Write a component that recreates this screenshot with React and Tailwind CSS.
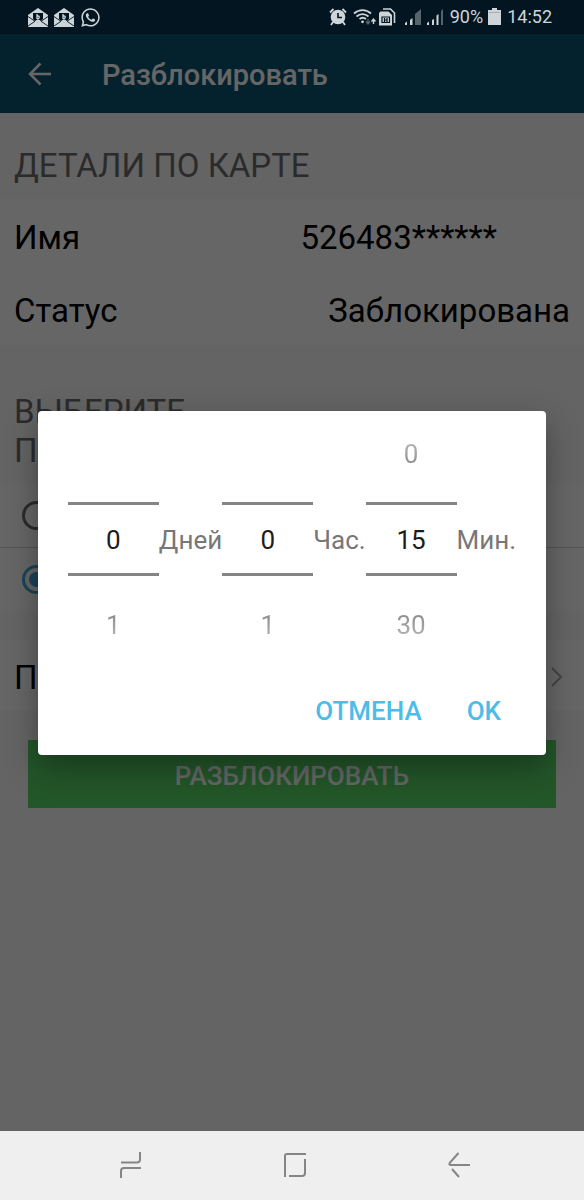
import { useState } from "react";
import { FaWhatsapp } from "react-icons/fa";

const initialPickers = [
  { id: "days", label: "Дней", options: ["0", "1", "2", "3"], index: 0 },
  { id: "hours", label: "Час.", options: ["0", "1", "2", "3"], index: 0 },
  { id: "minutes", label: "Мин.", options: ["0", "15", "30", "45"], index: 1 },
];

function App() {
  const [pickers, setPickers] = useState(initialPickers);
  const [mode, setMode] = useState("period");
  const [open, setOpen] = useState(true);

  const movePicker = (id, step) => {
    setPickers((previous) =>
      previous.map((picker) =>
        picker.id === id && picker.options[picker.index + step] !== undefined
          ? { ...picker, index: picker.index + step }
          : picker
      )
    );
  };

  return (
    <div className="flex min-h-screen flex-col bg-[#f9f9f9] font-[Roboto,sans-serif]">
      <StatusBar />

      <div className="relative flex flex-1 flex-col">
        <header className="flex h-[79px] items-center gap-[50px] bg-[#0b5473] px-7 text-white">
          <button type="button" aria-label="Назад">
            <BackArrow />
          </button>
          <h1 className="pt-[2px] text-[29px] font-medium leading-8">
            Разблокировать
          </h1>
        </header>

        <main className="flex-1 text-[33px] leading-[39px] text-black">
          <SectionTitle>ДЕТАЛИ ПО КАРТЕ</SectionTitle>

          <dl className="bg-white px-[14px]">
            <div className="flex h-[73px] items-center justify-between pt-1">
              <dt>Имя</dt>
              <dd className="pr-[73px]">526483******</dd>
            </div>
            <div className="flex h-[73px] items-center justify-between pt-1">
              <dt>Статус</dt>
              <dd>Заблокирована</dd>
            </div>
          </dl>

          <div className="pt-[14px]">
            <SectionTitle>
              ВЫБЕРИТЕ
              <br />П
            </SectionTitle>
          </div>

          <div className="bg-white">
            <RadioRow
              label="Бессрочно"
              checked={mode === "forever"}
              onChange={() => setMode("forever")}
            />
            <div className="h-px bg-[#d0d0d0]" />
            <RadioRow
              label="На период"
              checked={mode === "period"}
              onChange={() => setMode("period")}
            />
          </div>

          <button
            type="button"
            className="mt-[29px] flex h-[70px] w-full items-center justify-between bg-white pl-[14px] pr-[21px] pt-1"
          >
            <span>П</span>
            <svg width="13" height="22" viewBox="0 0 13 22" fill="none" stroke="#aaa" strokeWidth="2">
              <path d="M2 2l9 9-9 9" />
            </svg>
          </button>

          <div className="px-7 pt-[30px]">
            <button
              type="button"
              className="h-[68px] w-full bg-[#58d868] pt-1 text-[26px] font-medium text-white"
            >
              РАЗБЛОКИРОВАТЬ
            </button>
          </div>
        </main>

        {open && (
          <div className="absolute inset-0 flex items-center bg-black/60 px-[38px]">
            <div
              role="dialog"
              aria-modal="true"
              className="w-full rounded-[4px] bg-white shadow-[0_12px_32px_rgba(0,0,0,0.35)]"
            >
              <div className="flex justify-center">
                {pickers.map((picker) => (
                  <NumberPicker
                    key={picker.id}
                    picker={picker}
                    onMove={(step) => movePicker(picker.id, step)}
                  />
                ))}
              </div>

              <div className="flex justify-end gap-[45px] pb-6 pr-[45px] pt-[22px] text-[26px] font-medium leading-[39px] text-[#4dbce9]">
                <button type="button" onClick={() => setOpen(false)}>
                  ОТМЕНА
                </button>
                <button type="button" onClick={() => setOpen(false)}>
                  OK
                </button>
              </div>
            </div>
          </div>
        )}
      </div>

      <NavigationBar />
    </div>
  );
}

function SectionTitle({ children }) {
  return (
    <h2 className="px-[14px] pb-[14px] pt-[33px] text-[33px] leading-[39px] text-[#6c6c6c]">
      {children}
    </h2>
  );
}

function RadioRow({ label, checked, onChange }) {
  return (
    <div className="flex h-[63px] items-center px-[22px]">
      <input
        type="radio"
        name="mode"
        aria-label={label}
        checked={checked}
        onChange={onChange}
        className="grid size-[29px] appearance-none place-items-center rounded-full border-[3px] border-[#6c6c6c] before:size-[15px] before:rounded-full checked:border-[#3fa9dc] checked:before:bg-[#3fa9dc]"
      />
    </div>
  );
}

function NumberPicker({ picker, onMove }) {
  const { id, label, options, index } = picker;

  return (
    <div className="flex items-center text-[26px] leading-8">
      <div className="flex w-[91px] flex-col">
        <button
          type="button"
          aria-label={`${label} меньше`}
          onClick={() => onMove(-1)}
          className="mb-1 h-[87px] bg-linear-to-b from-[#b8b8b8] from-35% to-[#888] to-65% bg-clip-text text-transparent"
        >
          {options[index - 1]}
        </button>
        <input
          id={id}
          type="text"
          readOnly
          value={options[index]}
          className="h-[74px] w-full border-y-[3px] border-[#858585] bg-transparent pt-[2px] text-center text-[#1c1c1c] outline-none"
        />
        <button
          type="button"
          aria-label={`${label} больше`}
          onClick={() => onMove(1)}
          className="mt-1 h-[90px] bg-linear-to-b from-[#888] from-35% to-[#b8b8b8] to-65% bg-clip-text text-transparent"
        >
          {options[index + 1]}
        </button>
      </div>
      <label htmlFor={id} className="text-[#777]">
        {label}
      </label>
    </div>
  );
}

function StatusBar() {
  return (
    <div className="flex h-[34px] items-center justify-between bg-[#021521] pl-7 pr-8 text-[#cdd5d9]">
      <div className="flex items-center gap-[6px]">
        <MailIcon />
        <MailIcon />
        <FaWhatsapp size={21} />
      </div>

      <div className="flex items-center text-[18px] leading-5">
        <svg width="18" height="18" viewBox="0 0 18 18" fill="currentColor">
          <circle cx="9" cy="9" r="7.300" />
          <path d="M1 4.500L4.500 1M17 4.500L13.500 1M4 14l-2 3M14 14l2 3" stroke="currentColor" strokeWidth="1.800" />
          <path d="M9 5v4.500h4" fill="none" stroke="#021521" strokeWidth="1.600" />
        </svg>

        <svg className="ml-[6px]" width="23" height="18" viewBox="0 0 23 18" fill="none" stroke="currentColor" strokeWidth="1.800">
          <path d="M1 5.500c5-4.500 12-4.500 17 0M3.500 8.500c3.500-3.200 8.500-3.200 12 0M6.500 11c2-1.600 4.500-1.600 6.500 0" />
          <circle cx="9.500" cy="13.800" r="1.400" fill="currentColor" stroke="none" />
          <path d="M15 11v5m-2-2.500l2 2.500 2-2.500" stroke="#56646d" strokeWidth="1.400" />
          <path d="M20.500 16v-5m-2 2.500l2-2.500 2 2.500" strokeWidth="1.400" />
        </svg>

        <svg className="ml-[3px]" width="17" height="18" viewBox="0 0 17 18" fill="none" stroke="currentColor">
          <path d="M4 1h7.500l4 4v10" strokeWidth="1.600" />
          <path d="M0 5l1.500-1.500H9.500L13 7v10.500H0z" fill="currentColor" stroke="none" />
          <path d="M3 9h7.500v5.500H3zM5.500 10v4M8 10v4M5.500 12H8" stroke="#021521" strokeWidth="1.200" />
        </svg>

        <svg className="ml-2" width="18" height="18" viewBox="0 0 18 18" fill="currentColor">
          <path d="M1 17v-2l2-1.500V17zM6 17v-5l2.500-2v7z" />
          <path d="M11 17V6l6-5v16z" fill="#56646d" />
        </svg>

        <svg className="ml-1" width="18" height="18" viewBox="0 0 18 18" fill="currentColor">
          <path d="M1 17v-2l2-1.500V17zM6 17v-5l2-1v6zM10.500 17V7.500l2-1.500v11z" />
          <path d="M15 17V3l2-2v16z" fill="#56646d" />
        </svg>

        <span className="ml-[6px]">90%</span>

        <svg className="ml-[5px]" width="13" height="18" viewBox="0 0 13 18" fill="currentColor">
          <path d="M4 0h5v2h4v15H0V2h4z" />
          <path d="M1 4.500h11" stroke="#a3adb2" />
        </svg>

        <span className="ml-[6px]">14:52</span>
      </div>
    </div>
  );
}

function MailIcon() {
  return (
    <svg width="20" height="19" viewBox="0 0 20 19">
      <path d="M0 7l10-7 10 7v12H0z" fill="currentColor" />
      <path d="M5 5h10v6l-1.500 1.500-3.500 2-3.500-2L5 11z" fill="#021521" />
      <path d="M7 14.500c0-2 1.500-3 3-3s3 1 3 3z" fill="currentColor" />
      <path d="M9 6v5M9 8.200c2.800-1 3.200 2.600 0 2.500" fill="none" stroke="currentColor" strokeWidth="1.300" />
      <path d="M0 8.500l7 4.800L0 18M20 8.500l-7 4.800 7 4.700" fill="none" stroke="#021521" strokeWidth="0.900" />
    </svg>
  );
}

function BackArrow() {
  return (
    <svg width="24" height="24" viewBox="0 0 24 24" fill="none" stroke="currentColor" strokeWidth="2.500">
      <path d="M23 12H2M12.500 1.500L2 12l10.500 10.500" />
    </svg>
  );
}

function NavigationBar() {
  return (
    <nav className="flex h-[69px] items-center justify-center gap-[138px] bg-[#efefef] pb-[2px] pl-[7px] text-[#858585]">
      <button type="button" aria-label="Недавние">
        <NavIcon>
          <path d="M2 10.500h16q3 0 3-3V0M22 16H5q-3 0-3 3v7" />
        </NavIcon>
      </button>
      <button type="button" aria-label="Домой">
        <NavIcon>
          <path d="M2 25V4q0-2 2-2h19M22 7v14q0 3-3 3H6" />
        </NavIcon>
      </button>
      <button type="button" aria-label="Назад">
        <NavIcon>
          <path d="M11.500 1L3 10.500q-1.500 2.500.5 2.500H23M5 17l7 8" />
        </NavIcon>
      </button>
    </nav>
  );
}

function NavIcon({ children }) {
  return (
    <svg width="26" height="26" viewBox="0 0 26 26" fill="none" stroke="currentColor" strokeWidth="2">
      {children}
    </svg>
  );
}

export default App;
